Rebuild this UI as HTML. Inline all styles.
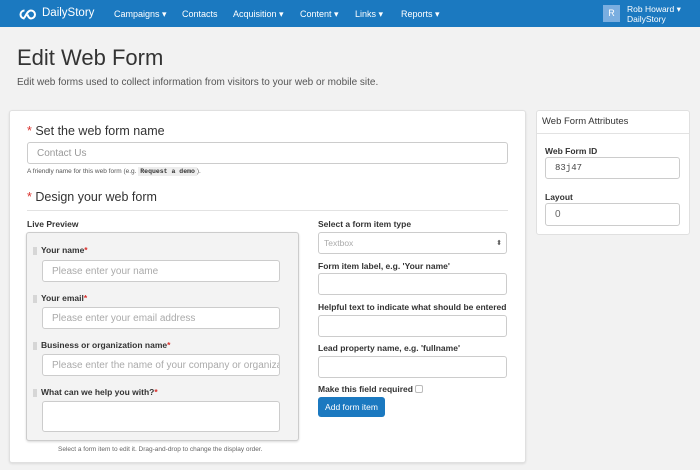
<!DOCTYPE html>
<html><head><meta charset="utf-8"><style>
*{box-sizing:border-box;margin:0;padding:0}
body{width:700px;height:470px;background:#f2f2f2;font-family:"Liberation Sans",sans-serif;position:relative;overflow:hidden;color:#333}
.a{position:absolute;white-space:nowrap}
.nav{left:0;top:0;width:700px;height:27px;background:#1b79c0}
.nl{color:#fff;font-size:9px;top:9px}
.inp{position:absolute;background:#fff;border:1px solid #ccc;border-radius:3px;font-size:10px;color:#aaa;padding-left:9px;display:flex;align-items:center;white-space:nowrap;overflow:hidden}
.lb{font-size:8.5px;font-weight:bold;color:#333}
.req{color:#d9302c}
.h{font-size:12.5px;color:#333;font-family:"Liberation Sans",sans-serif}
.dr{position:absolute;width:4px;height:8px;background:radial-gradient(circle,#bbb 0.7px,transparent 0.9px) 0 0/2px 2px}
</style></head><body>
<div class="a nav"></div>
<svg class="a" style="left:17px;top:8px" width="22" height="13" viewBox="0 0 22 13"><path d="M7.5 2.5A4 4 0 1 0 7.5 10.5M6 10.5C8.5 10.5 9.5 2.5 14 2.5A4 4 0 1 1 14 10.5C11.5 10.5 10.5 6.5 10.5 6.5" fill="none" stroke="#fff" stroke-width="2"/></svg>
<div class="a" style="left:42px;top:7px;color:#fff;font-size:11.5px">DailyStory</div>
<div class="a nl" style="left:114px">Campaigns ▾</div>
<div class="a nl" style="left:182px">Contacts</div>
<div class="a nl" style="left:233px">Acquisition ▾</div>
<div class="a nl" style="left:300px">Content ▾</div>
<div class="a nl" style="left:355px">Links ▾</div>
<div class="a nl" style="left:401px">Reports ▾</div>
<div class="a" style="left:603px;top:5px;width:17px;height:17px;background:#7aaee0;color:#fff;font-size:9px;text-align:center;line-height:17px">R</div>
<div class="a" style="left:627px;top:4px;color:#fff;font-size:8.5px;line-height:10px">Rob Howard ▾<br>DailyStory</div>
<div class="a" style="left:17px;top:45px;font-size:22px;color:#333">Edit Web Form</div>
<div class="a" style="left:17px;top:77px;font-size:10px;color:#555">Edit web forms used to collect information from visitors to your web or mobile site.</div>

<div class="a" style="left:9px;top:110px;width:517px;height:353px;background:#fff;border:1px solid #e0e0e0;border-radius:3px;box-shadow:0 1px 2px rgba(0,0,0,.1)"></div>
<div class="a h" style="left:27px;top:124px"><span class="req">*</span> Set the web form name</div>
<div class="inp" style="left:27px;top:142px;width:481px;height:22px;color:#999">Contact Us</div>
<div class="a" style="left:27px;top:168px;font-size:6.5px;color:#555">A friendly name for this web form (e.g. <span style="font-family:'Liberation Mono',monospace;background:#eee;padding:1px 2px;color:#333;font-weight:bold">Request a demo</span>).</div>
<div class="a h" style="left:27px;top:190px"><span class="req">*</span> Design your web form</div>
<div class="a" style="left:27px;top:210px;width:481px;height:1px;background:#e2e2e2"></div>
<div class="a lb" style="left:27px;top:219px">Live Preview</div>
<div class="a" style="left:26px;top:232px;width:273px;height:209px;background:#f3f3f3;border:1px solid #ccc;border-radius:3px;box-shadow:0 1px 2px rgba(0,0,0,.15)"></div>
<div class="dr" style="left:33px;top:247px"></div><div class="a lb" style="left:41px;top:245px">Your name<span class="req">*</span></div>
<div class="inp" style="left:42px;top:260px;width:238px;height:22px">Please enter your name</div>
<div class="dr" style="left:33px;top:295px"></div><div class="a lb" style="left:41px;top:293px">Your email<span class="req">*</span></div>
<div class="inp" style="left:42px;top:307px;width:238px;height:22px">Please enter your email address</div>
<div class="dr" style="left:33px;top:342px"></div><div class="a lb" style="left:41px;top:340px">Business or organization name<span class="req">*</span></div>
<div class="inp" style="left:42px;top:354px;width:238px;height:22px">Please enter the name of your company or organizati</div>
<div class="dr" style="left:33px;top:389px"></div><div class="a lb" style="left:41px;top:387px">What can we help you with?<span class="req">*</span></div>
<div class="inp" style="left:42px;top:401px;width:238px;height:31px"></div>
<div class="a" style="left:58px;top:446px;font-size:6.5px;color:#666">Select a form item to edit it. Drag-and-drop to change the display order.</div>

<div class="a lb" style="left:318px;top:219px">Select a form item type</div>
<div class="inp" style="left:318px;top:232px;width:189px;height:22px;font-size:8.5px;padding-left:5px">Textbox<span style="position:absolute;right:4px;color:#555;font-size:7px">⬍</span></div>
<div class="a lb" style="left:318px;top:261px">Form item label, e.g. 'Your name'</div>
<div class="inp" style="left:318px;top:273px;width:189px;height:22px"></div>
<div class="a lb" style="left:318px;top:302px">Helpful text to indicate what should be entered</div>
<div class="inp" style="left:318px;top:315px;width:189px;height:22px"></div>
<div class="a lb" style="left:318px;top:343px">Lead property name, e.g. 'fullname'</div>
<div class="inp" style="left:318px;top:356px;width:189px;height:22px"></div>
<div class="a lb" style="left:318px;top:384px">Make this field required <span style="display:inline-block;width:8px;height:8px;border:1px solid #bbb;border-radius:2px;vertical-align:-1px;background:#fff"></span></div>
<div class="a" style="left:318px;top:397px;width:67px;height:20px;background:#1b79c0;border-radius:3px;color:#fff;font-size:8.5px;text-align:center;line-height:20px">Add form item</div>

<div class="a" style="left:536px;top:110px;width:154px;height:125px;background:#fff;border:1px solid #e0e0e0;border-radius:3px"></div>
<div class="a" style="left:542px;top:116px;font-size:9.5px;color:#333">Web Form Attributes</div>
<div class="a" style="left:537px;top:133px;width:152px;height:1px;background:#e2e2e2"></div>
<div class="a lb" style="left:545px;top:146px">Web Form ID</div>
<div class="inp" style="left:545px;top:157px;width:135px;height:22px;color:#444;font-family:'Liberation Mono',monospace;font-size:9px">83j47</div>
<div class="a lb" style="left:545px;top:192px">Layout</div>
<div class="inp" style="left:545px;top:203px;width:135px;height:23px;color:#666">0</div>
</body></html>
